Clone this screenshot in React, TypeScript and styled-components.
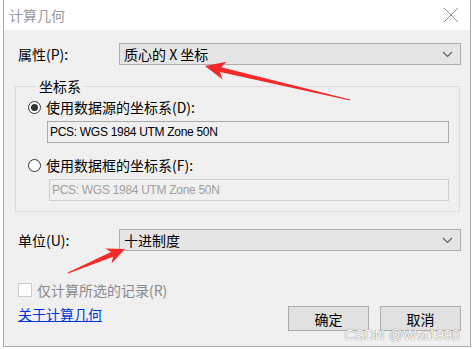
import * as React from "react";
import styled, { createGlobalStyle } from "styled-components";

const GlobalStyle = createGlobalStyle`
  html, body {
    margin: 0;
    padding: 0;
    background: #ffffff;
  }
  body {
    font-family: "Noto Sans CJK SC", "Liberation Sans", sans-serif;
    font-size: 14px;
    color: #000;
  }
`;

const Page = styled.div`
  position: relative;
  width: 474px;
  height: 349px;
  overflow: hidden;
`;

const Window = styled.div`
  margin-left: 3px;
  width: 466px;
  height: 346px;
  border: 1px solid #a9a9a9;
  border-top: none;
  display: flex;
  flex-direction: column;
  background: #f0f0f0;
`;

const TitleBar = styled.div`
  height: 30px;
  flex: none;
  background: #fff;
  display: flex;
  align-items: center;
  justify-content: space-between;
  padding: 0 11px 0 5px;
  color: #9a9a9a;
  font-size: 14px;
`;

const Body = styled.div`
  flex: 1;
  padding: 13px 9px 0 11px;
  display: flex;
  flex-direction: column;
`;

const FieldRow = styled.div<{ $top?: number }>`
  display: flex;
  align-items: center;
  height: 22px;
  margin-top: ${(p) => p.$top ?? 0}px;
`;

const Label = styled.div`
  width: 101px;
  padding-left: 3px;
  flex: none;
`;

const Combo = styled.div`
  flex: 1;
  height: 22px;
  box-sizing: border-box;
  border: 1px solid #adadad;
  background: #e5e5e5;
  display: flex;
  align-items: center;
  justify-content: space-between;
  padding: 0 7px 0 4px;
`;

const Group = styled.fieldset`
  margin: 12px 1px 0 0;
  padding: 0 10px 0 12px;
  height: 135px;
  box-sizing: border-box;
  border: 1px solid #dcdcdc;
  display: flex;
  flex-direction: column;
`;

const Legend = styled.legend`
  padding: 0 3px;
  margin-left: 8px;
  line-height: 18px;
`;

const RadioRow = styled.label<{ $top: number }>`
  display: flex;
  align-items: center;
  gap: 5px;
  height: 18px;
  line-height: 18px;
  margin-top: ${(p) => p.$top}px;
`;

const RadioDot = styled.span<{ $checked?: boolean }>`
  width: 13px;
  height: 13px;
  box-sizing: border-box;
  border-radius: 50%;
  border: 1px solid #333;
  background: #fff;
  display: flex;
  align-items: center;
  justify-content: center;
  flex: none;

  &::after {
    content: "";
    width: 7px;
    height: 7px;
    border-radius: 50%;
    background: #333;
    display: ${(p) => (p.$checked ? "block" : "none")};
  }
`;

const TextBox = styled.div<{ $disabled?: boolean }>`
  margin: 5px 0 0 ${(p) => (p.$disabled ? 21 : 19)}px;
  height: 22px;
  box-sizing: border-box;
  border: 1px solid ${(p) => (p.$disabled ? "#cfcfcf" : "#a9a9a9")};
  background: #f0f0f0;
  display: flex;
  align-items: center;
  padding-left: 2px;
  font-family: "Liberation Sans", sans-serif;
  font-size: 12px;
  letter-spacing: -0.3px;
  color: ${(p) => (p.$disabled ? "#a0a0a0" : "#000")};
`;

const CheckRow = styled.div`
  display: flex;
  align-items: center;
  gap: 5px;
  margin: 31px 0 0 3px;
  color: #8a8a8a;
  height: 16px;
`;

const CheckBox = styled.span`
  width: 14px;
  height: 14px;
  box-sizing: border-box;
  border: 1px solid #cccccc;
  background: #fff;
`;

const Footer = styled.div`
  display: flex;
  align-items: flex-start;
  justify-content: space-between;
  margin-top: 7px;
  padding-left: 3px;
`;

const Link = styled.a`
  color: #0033dd;
  text-decoration: underline;
  line-height: 18px;
`;

const Buttons = styled.div`
  display: flex;
  gap: 11px;
  margin-top: 1px;
`;

const Button = styled.button`
  width: 81px;
  height: 25px;
  border: 1px solid #adadad;
  background: #e1e1e1;
  font: inherit;
  color: #000;
  padding: 0;
`;

const Watermark = styled.div`
  position: absolute;
  right: 14px;
  top: 327px;
  font-family: "Liberation Sans", sans-serif;
  font-size: 14px;
  color: #ffffff;
  text-shadow: 0 0 1px #777, 0 0 1px #999;
  letter-spacing: 0.2px;
`;

const Overlay = styled.svg`
  position: absolute;
  left: 0;
  top: 0;
  pointer-events: none;
`;

const Chevron = () => (
  <svg width="11" height="7" viewBox="0 0 11 7">
    <polyline points="1,1 5.5,5.5 10,1" fill="none" stroke="#606060" strokeWidth="1.2" />
  </svg>
);

const CloseIcon = () => (
  <svg width="16" height="16" viewBox="0 0 16 16">
    <path d="M1 1 L15 15 M15 1 L1 15" stroke="#8c8c8c" strokeWidth="1" fill="none" />
  </svg>
);

export default function App() {
  return (
    <>
      <GlobalStyle />
      <Page>
        <Window>
          <TitleBar>
            <span>计算几何</span>
            <CloseIcon />
          </TitleBar>
          <Body>
            <FieldRow>
              <Label>属性(P):</Label>
              <Combo>
                <span>质心的 X 坐标</span>
                <Chevron />
              </Combo>
            </FieldRow>

            <Group>
              <Legend>坐标系</Legend>
              <RadioRow $top={3}>
                <RadioDot $checked />
                使用数据源的坐标系(D):
              </RadioRow>
              <TextBox>PCS: WGS 1984 UTM Zone 50N</TextBox>
              <RadioRow $top={13}>
                <RadioDot />
                使用数据框的坐标系(F):
              </RadioRow>
              <TextBox $disabled>PCS: WGS 1984 UTM Zone 50N</TextBox>
            </Group>

            <FieldRow $top={17}>
              <Label>单位(U):</Label>
              <Combo>
                <span>十进制度</span>
                <Chevron />
              </Combo>
            </FieldRow>

            <CheckRow>
              <CheckBox />
              仅计算所选的记录(R)
            </CheckRow>

            <Footer>
              <Link>关于计算几何</Link>
              <Buttons>
                <Button>确定</Button>
                <Button>取消</Button>
              </Buttons>
            </Footer>
          </Body>
        </Window>

        <Watermark>CSDN @Wst1998</Watermark>

        <Overlay width="474" height="349" viewBox="0 0 474 349">
          <polygon
            fill="#f22a2a"
            points="350.1,99.5 221.2,67.2 226.5,61.8 205,66 222.5,79.4 220,72 349.9,100.5"
          />
          <polygon
            fill="#f22a2a"
            points="68.2,273.5 113.1,256.7 111.5,263.4 125,249 105.3,248.6 111.1,252.1 67.8,272.5"
          />
        </Overlay>
      </Page>
    </>
  );
}
